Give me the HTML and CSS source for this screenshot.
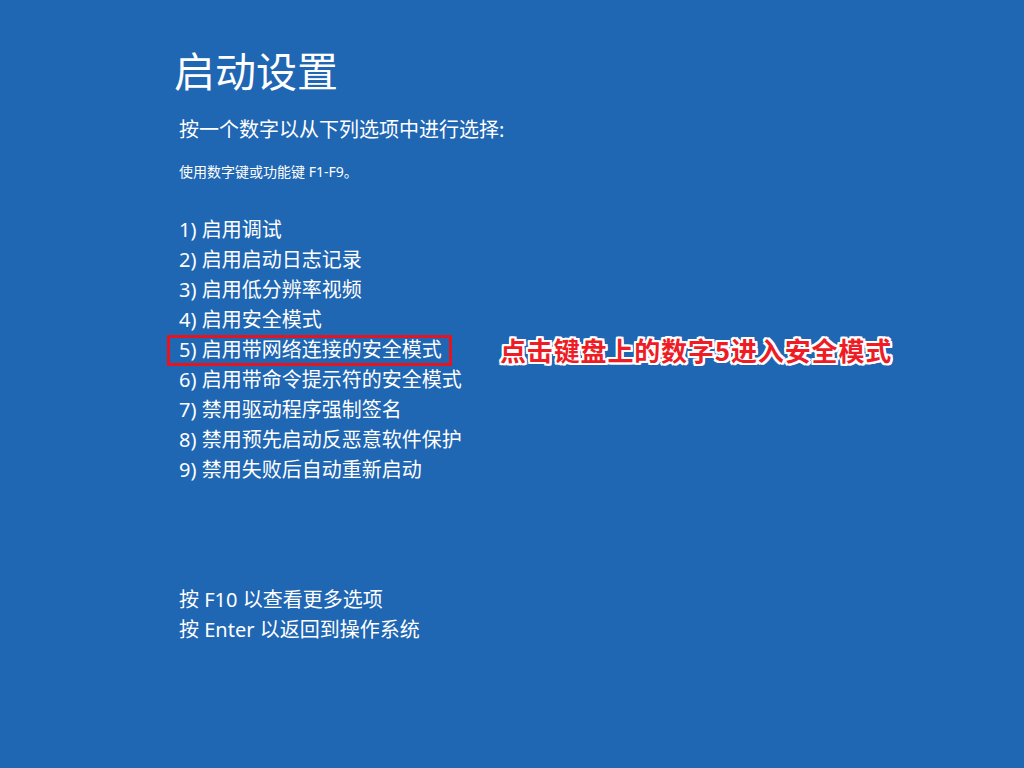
FILE: index.html
```html
<!DOCTYPE html>
<html lang="zh-CN">
<head>
<meta charset="utf-8">
<title>启动设置</title>
<link rel="stylesheet" href="styles.css">
</head>
<body>
<main class="screen">
  <h1 class="title">启动设置</h1>
  <p class="prompt">按一个数字以从下列选项中进行选择:</p>
  <p class="hint">使用数字键或功能键 F1-F9。</p>
  <ol class="options">
    <li>1) 启用调试</li>
    <li>2) 启用启动日志记录</li>
    <li>3) 启用低分辨率视频</li>
    <li>4) 启用安全模式</li>
    <li class="picked">5) 启用带网络连接的安全模式<span class="mark"></span><span class="callout">点击键盘上的数字5进入安全模式</span></li>
    <li>6) 启用带命令提示符的安全模式</li>
    <li>7) 禁用驱动程序强制签名</li>
    <li>8) 禁用预先启动反恶意软件保护</li>
    <li>9) 禁用失败后自动重新启动</li>
  </ol>
  <div class="footer">
    <p>按 F10 以查看更多选项</p>
    <p>按 Enter 以返回到操作系统</p>
  </div>
</main>
</body>
</html>
```

FILE: styles.css
```css
html, body {
  margin: 0;
  padding: 0;
  height: 100%;
}
body {
  background: #1f66b3;
  color: #ffffff;
  font-family: "Noto Sans", "Noto Sans CJK SC", sans-serif;
}
.screen {
  padding: 47px 0 0 179px;
  box-sizing: border-box;
  height: 768px;
}
.title {
  margin: 0 0 0 -5px;
  font-size: 41px;
  line-height: 48px;
  font-weight: 400;
}
.prompt {
  margin: 20px 0 0;
  font-size: 20px;
  line-height: 30px;
}
.hint {
  margin: 17px 0 0;
  font-size: 14px;
  line-height: 20px;
}
.options {
  list-style: none;
  margin: 33px 0 0;
  padding: 0;
  font-size: 20px;
  line-height: 30px;
}
.options li {
  white-space: nowrap;
}
.picked {
  position: relative;
}
.mark {
  position: absolute;
  left: -12px;
  top: 0;
  width: 285px;
  height: 31px;
  box-sizing: border-box;
  border: 3px solid #e5141f;
}
.callout {
  position: absolute;
  left: 321px;
  top: -2px;
  font-family: "Noto Sans CJK SC", sans-serif;
  font-weight: 700;
  font-size: 26px;
  line-height: 34px;
  color: #ee1c25;
  letter-spacing: 0.85px;
  text-shadow:
    2px 0 0 #fff, -2px 0 0 #fff, 0 2px 0 #fff, 0 -2px 0 #fff,
    2px 2px 0 #fff, -2px -2px 0 #fff, 2px -2px 0 #fff, -2px 2px 0 #fff,
    1px 2px 0 #fff, 2px 1px 0 #fff, -1px -2px 0 #fff, -2px -1px 0 #fff;
}
.footer {
  margin-top: 100px;
  font-size: 20px;
  line-height: 30px;
}
.footer p {
  margin: 0;
}
```
